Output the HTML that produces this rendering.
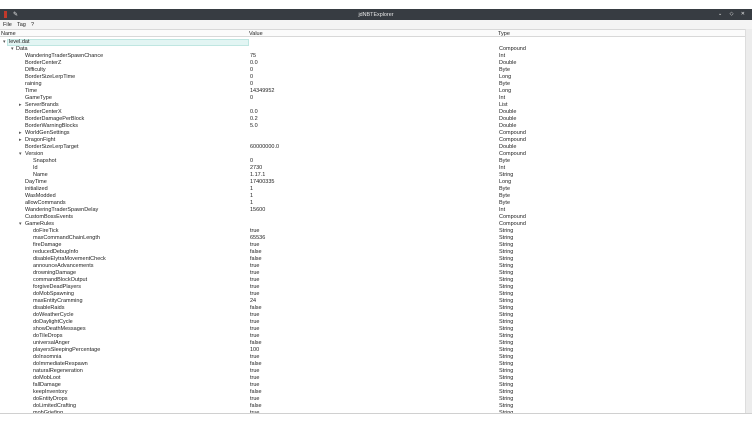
<!DOCTYPE html>
<html><head><meta charset="utf-8"><style>
*{margin:0;padding:0;box-sizing:border-box}
body{width:752px;height:423px;background:#fff;font-family:"Liberation Sans",sans-serif;font-size:5.5px;color:#222;position:relative;overflow:hidden}
#tb{position:absolute;top:9px;left:0;width:752px;height:11px;background:#373c42;color:#e8e8e8}
#tb .t{position:absolute;left:0;width:752px;top:2.5px;text-align:center;font-size:5.4px}
#mb{position:absolute;top:20px;left:0;width:752px;height:9px;background:#f4f4f4}
#mb span{position:absolute;top:2px}
#hd{position:absolute;top:29px;left:0;width:745px;height:8px;background:#fbfbfb;border-top:1px solid #d8d8d8;border-bottom:1px solid #d8d8d8}
#hd span{position:absolute;top:1px}
#rows{position:absolute;top:39px;left:0;width:745px}
.r{height:7px;line-height:7px;position:relative;white-space:nowrap}
.r span{position:absolute;top:0}
.n{left:25px}.d2 .n{left:33px}
.v{left:250px}.ty{left:499px}
.r span.a{font-size:5px;color:#555;top:0}
#sb{position:absolute;left:745px;top:29px;width:7px;height:385px;background:#ececec;border-left:1px solid #ddd}
#bot{position:absolute;top:413px;left:0;width:752px;height:10px;background:#fff;border-top:1px solid #d0d0d0}
</style></head><body>
<div id="tb"><span style="position:absolute;left:4px;top:2px;width:3px;height:7px;background:#c0392b"></span><span style="position:absolute;left:13px;top:2px;font-size:6px">✎</span><div class="t">jdNBTExplorer</div><span style="position:absolute;right:4px;top:2px;font-size:5px;letter-spacing:3px">⌄ ◇ ✕</span></div>
<div id="mb"><span style="left:3px">File</span><span style="left:17px">Tag</span><span style="left:31px">?</span></div>
<div id="hd"><span style="left:1px">Name</span><span style="left:249px">Value</span><span style="left:498px">Type</span></div>
<div id="rows">
<div class="r"><span class="a" style="left:3px">▾</span><span style="left:7px;width:242px;height:7px;background:#e2f5f3;border:1px solid #bfe6e1"></span><span style="left:9px">level.dat</span></div>
<div class="r"><span class="a" style="left:11px">▾</span><span style="left:16px">Data</span><span class="ty">Compound</span></div>
<div class="r"><span class="n">WanderingTraderSpawnChance</span><span class="v">75</span><span class="ty">Int</span></div>
<div class="r"><span class="n">BorderCenterZ</span><span class="v">0.0</span><span class="ty">Double</span></div>
<div class="r"><span class="n">Difficulty</span><span class="v">0</span><span class="ty">Byte</span></div>
<div class="r"><span class="n">BorderSizeLerpTime</span><span class="v">0</span><span class="ty">Long</span></div>
<div class="r"><span class="n">raining</span><span class="v">0</span><span class="ty">Byte</span></div>
<div class="r"><span class="n">Time</span><span class="v">14349952</span><span class="ty">Long</span></div>
<div class="r"><span class="n">GameType</span><span class="v">0</span><span class="ty">Int</span></div>
<div class="r"><span class="a" style="left:19px">▸</span><span class="n">ServerBrands</span><span class="ty">List</span></div>
<div class="r"><span class="n">BorderCenterX</span><span class="v">0.0</span><span class="ty">Double</span></div>
<div class="r"><span class="n">BorderDamagePerBlock</span><span class="v">0.2</span><span class="ty">Double</span></div>
<div class="r"><span class="n">BorderWarningBlocks</span><span class="v">5.0</span><span class="ty">Double</span></div>
<div class="r"><span class="a" style="left:19px">▸</span><span class="n">WorldGenSettings</span><span class="ty">Compound</span></div>
<div class="r"><span class="a" style="left:19px">▸</span><span class="n">DragonFight</span><span class="ty">Compound</span></div>
<div class="r"><span class="n">BorderSizeLerpTarget</span><span class="v">60000000.0</span><span class="ty">Double</span></div>
<div class="r"><span class="a" style="left:19px">▾</span><span class="n">Version</span><span class="ty">Compound</span></div>
<div class="r d2"><span class="n">Snapshot</span><span class="v">0</span><span class="ty">Byte</span></div>
<div class="r d2"><span class="n">Id</span><span class="v">2730</span><span class="ty">Int</span></div>
<div class="r d2"><span class="n">Name</span><span class="v">1.17.1</span><span class="ty">String</span></div>
<div class="r"><span class="n">DayTime</span><span class="v">17400335</span><span class="ty">Long</span></div>
<div class="r"><span class="n">initialized</span><span class="v">1</span><span class="ty">Byte</span></div>
<div class="r"><span class="n">WasModded</span><span class="v">1</span><span class="ty">Byte</span></div>
<div class="r"><span class="n">allowCommands</span><span class="v">1</span><span class="ty">Byte</span></div>
<div class="r"><span class="n">WanderingTraderSpawnDelay</span><span class="v">15600</span><span class="ty">Int</span></div>
<div class="r"><span class="n">CustomBossEvents</span><span class="ty">Compound</span></div>
<div class="r"><span class="a" style="left:19px">▾</span><span class="n">GameRules</span><span class="ty">Compound</span></div>
<div class="r d2"><span class="n">doFireTick</span><span class="v">true</span><span class="ty">String</span></div>
<div class="r d2"><span class="n">maxCommandChainLength</span><span class="v">65536</span><span class="ty">String</span></div>
<div class="r d2"><span class="n">fireDamage</span><span class="v">true</span><span class="ty">String</span></div>
<div class="r d2"><span class="n">reducedDebugInfo</span><span class="v">false</span><span class="ty">String</span></div>
<div class="r d2"><span class="n">disableElytraMovementCheck</span><span class="v">false</span><span class="ty">String</span></div>
<div class="r d2"><span class="n">announceAdvancements</span><span class="v">true</span><span class="ty">String</span></div>
<div class="r d2"><span class="n">drowningDamage</span><span class="v">true</span><span class="ty">String</span></div>
<div class="r d2"><span class="n">commandBlockOutput</span><span class="v">true</span><span class="ty">String</span></div>
<div class="r d2"><span class="n">forgiveDeadPlayers</span><span class="v">true</span><span class="ty">String</span></div>
<div class="r d2"><span class="n">doMobSpawning</span><span class="v">true</span><span class="ty">String</span></div>
<div class="r d2"><span class="n">maxEntityCramming</span><span class="v">24</span><span class="ty">String</span></div>
<div class="r d2"><span class="n">disableRaids</span><span class="v">false</span><span class="ty">String</span></div>
<div class="r d2"><span class="n">doWeatherCycle</span><span class="v">true</span><span class="ty">String</span></div>
<div class="r d2"><span class="n">doDaylightCycle</span><span class="v">true</span><span class="ty">String</span></div>
<div class="r d2"><span class="n">showDeathMessages</span><span class="v">true</span><span class="ty">String</span></div>
<div class="r d2"><span class="n">doTileDrops</span><span class="v">true</span><span class="ty">String</span></div>
<div class="r d2"><span class="n">universalAnger</span><span class="v">false</span><span class="ty">String</span></div>
<div class="r d2"><span class="n">playersSleepingPercentage</span><span class="v">100</span><span class="ty">String</span></div>
<div class="r d2"><span class="n">doInsomnia</span><span class="v">true</span><span class="ty">String</span></div>
<div class="r d2"><span class="n">doImmediateRespawn</span><span class="v">false</span><span class="ty">String</span></div>
<div class="r d2"><span class="n">naturalRegeneration</span><span class="v">true</span><span class="ty">String</span></div>
<div class="r d2"><span class="n">doMobLoot</span><span class="v">true</span><span class="ty">String</span></div>
<div class="r d2"><span class="n">fallDamage</span><span class="v">true</span><span class="ty">String</span></div>
<div class="r d2"><span class="n">keepInventory</span><span class="v">false</span><span class="ty">String</span></div>
<div class="r d2"><span class="n">doEntityDrops</span><span class="v">true</span><span class="ty">String</span></div>
<div class="r d2"><span class="n">doLimitedCrafting</span><span class="v">false</span><span class="ty">String</span></div>
<div class="r d2"><span class="n">mobGriefing</span><span class="v">true</span><span class="ty">String</span></div>
</div>
<div id="sb"></div>
<div id="bot"></div>
</body></html>
